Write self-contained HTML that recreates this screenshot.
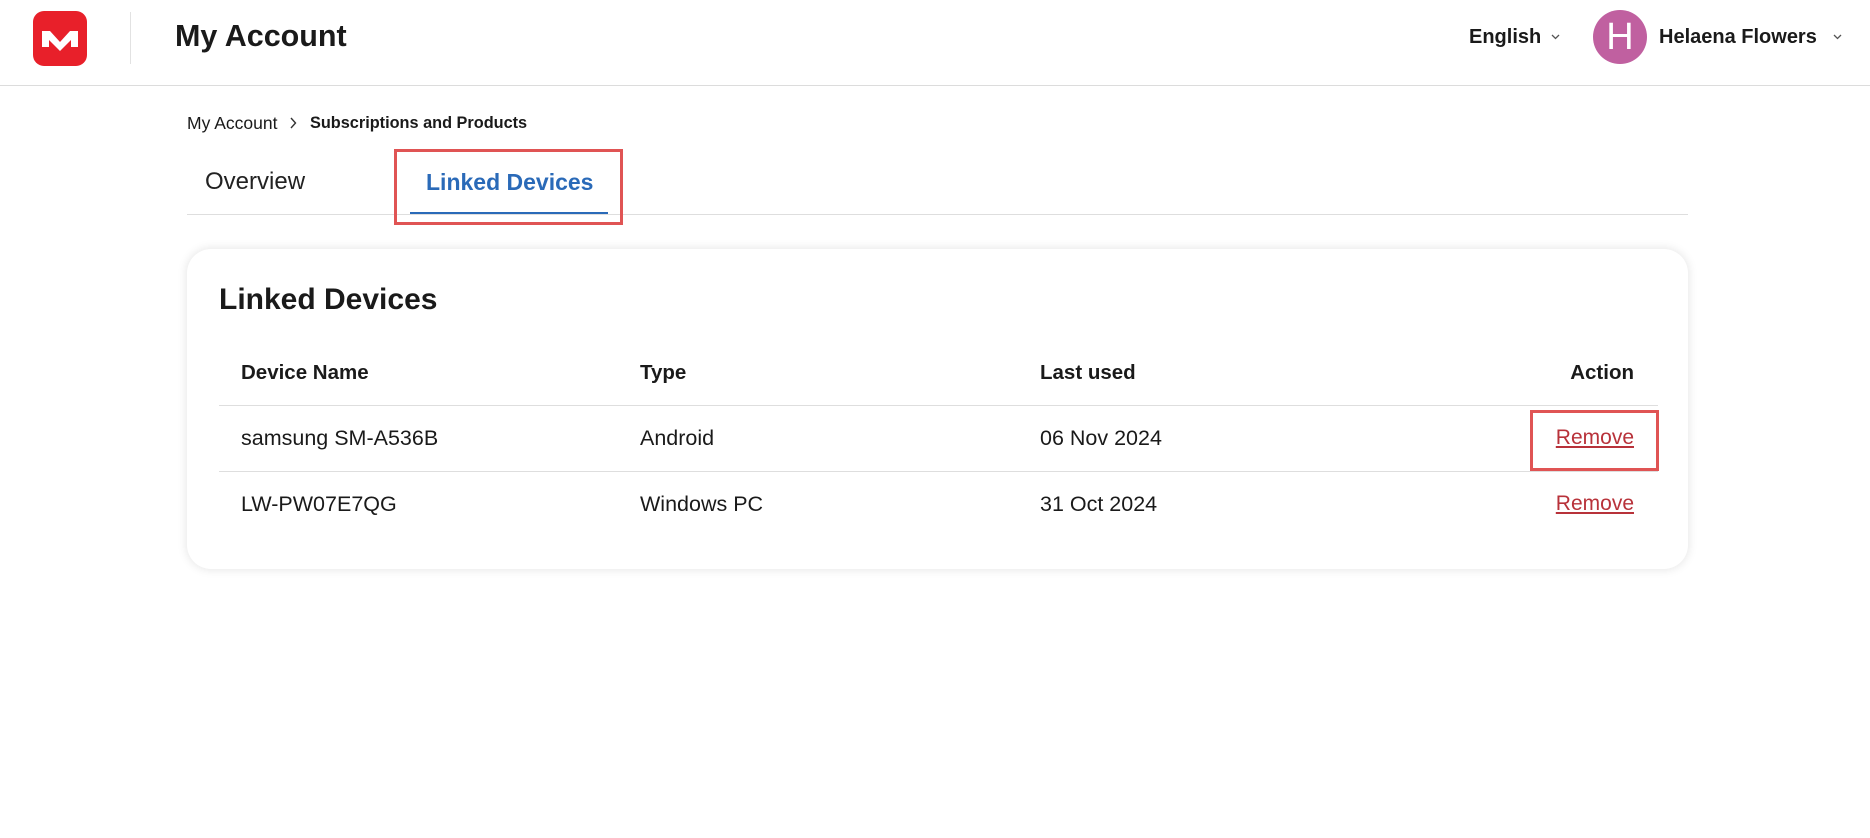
<!DOCTYPE html>
<html><head><meta charset="utf-8"><style>
*{box-sizing:border-box;margin:0;padding:0}
body{width:1870px;height:838px;background:#fff;font-family:"Liberation Sans",Arial,sans-serif;color:#1a1a1a;position:relative;overflow:hidden}
.a{position:absolute;white-space:nowrap}
</style></head><body>
<div class="a" style="left:0;top:0;width:1870px;height:86px;border-bottom:1px solid #dcdcdc"></div>
<div class="a" style="left:33px;top:11px;width:54px;height:55px;background:#e8202a;border-radius:11px">
<svg width="54" height="55" viewBox="0 0 54 55"><path d="M9 20 L17 20 L27 31 L37 20 L45 20 L45 36 L38 36 L38 29 L27 40 L16 29 L16 36 L9 36 Z" fill="#fff"/></svg></div>
<div class="a" style="left:130px;top:12px;width:1px;height:52px;background:#e2e2e2"></div>
<div class="a" style="left:175px;top:19px;font-size:30.5px;font-weight:bold;line-height:35px">My Account</div>
<div class="a" style="left:1469px;top:25px;font-size:20px;font-weight:bold;line-height:24px">English</div>
<svg class="a" style="left:1550px;top:33px" width="11" height="8" viewBox="0 0 11 8"><path d="M2 2 L5.5 5.5 L9 2" stroke="#555" stroke-width="1.3" fill="none"/></svg>
<div class="a" style="left:1593px;top:10px;width:54px;height:54px;border-radius:50%;background:#c060a0;color:#fff;font-size:38px;line-height:54px;text-align:center">H</div>
<div class="a" style="left:1659px;top:25px;font-size:20px;font-weight:bold;line-height:24px">Helaena Flowers</div>
<svg class="a" style="left:1832px;top:33px" width="11" height="8" viewBox="0 0 11 8"><path d="M2 2 L5.5 5.5 L9 2" stroke="#555" stroke-width="1.3" fill="none"/></svg>

<div class="a" style="left:187px;top:113px;font-size:17.5px;line-height:20px">My Account</div>
<svg class="a" style="left:288px;top:116px" width="10" height="14" viewBox="0 0 10 14"><path d="M3 2 L7.5 7 L3 12" stroke="#333" stroke-width="1.4" fill="none"/></svg>
<div class="a" style="left:310px;top:113px;font-size:16.3px;font-weight:bold;line-height:20px">Subscriptions and Products</div>

<div class="a" style="left:205px;top:168px;font-size:24px;line-height:28px;color:#222">Overview</div>
<div class="a" style="left:426px;top:169px;font-size:23px;line-height:27px;font-weight:bold;color:#2a6ab8">Linked Devices</div>
<div class="a" style="left:187px;top:214px;width:1501px;height:1px;background:#dedede"></div>
<div class="a" style="left:410px;top:212px;width:198px;height:2px;background:#2a6ab8"></div>
<div class="a" style="left:394px;top:149px;width:229px;height:76px;border:3px solid #e05454"></div>

<div class="a" style="left:187px;top:249px;width:1501px;height:320px;border-radius:24px;background:#fff;box-shadow:0 0 10px rgba(0,0,0,0.12)"></div>
<div class="a" style="left:219px;top:282px;font-size:30px;font-weight:bold;line-height:35px">Linked Devices</div>
<div class="a" style="left:241px;top:361px;font-size:20.5px;font-weight:bold;line-height:23px">Device Name</div>
<div class="a" style="left:640px;top:361px;font-size:20.5px;font-weight:bold;line-height:23px">Type</div>
<div class="a" style="left:1040px;top:361px;font-size:20.5px;font-weight:bold;line-height:23px">Last used</div>
<div class="a" style="left:1534px;width:100px;text-align:right;top:361px;font-size:20.5px;font-weight:bold;line-height:23px">Action</div>
<div class="a" style="left:219px;top:405px;width:1439px;height:1px;background:#dedede"></div>
<div class="a" style="left:241px;top:426px;font-size:21.5px;line-height:24px">samsung SM-A536B</div>
<div class="a" style="left:640px;top:426px;font-size:21.5px;line-height:24px">Android</div>
<div class="a" style="left:1040px;top:426px;font-size:21.5px;line-height:24px">06 Nov 2024</div>
<div class="a" style="left:1534px;width:100px;text-align:right;top:426px;font-size:21px;line-height:24px;color:#b8323a;text-decoration:underline">Remove</div>
<div class="a" style="left:219px;top:471px;width:1439px;height:1px;background:#dedede"></div>
<div class="a" style="left:241px;top:492px;font-size:21.5px;line-height:24px">LW-PW07E7QG</div>
<div class="a" style="left:640px;top:492px;font-size:21.5px;line-height:24px">Windows PC</div>
<div class="a" style="left:1040px;top:492px;font-size:21.5px;line-height:24px">31 Oct 2024</div>
<div class="a" style="left:1534px;width:100px;text-align:right;top:492px;font-size:21px;line-height:24px;color:#b8323a;text-decoration:underline">Remove</div>
<div class="a" style="left:1530px;top:410px;width:129px;height:61px;border:3px solid #e05454"></div>
</body></html>
